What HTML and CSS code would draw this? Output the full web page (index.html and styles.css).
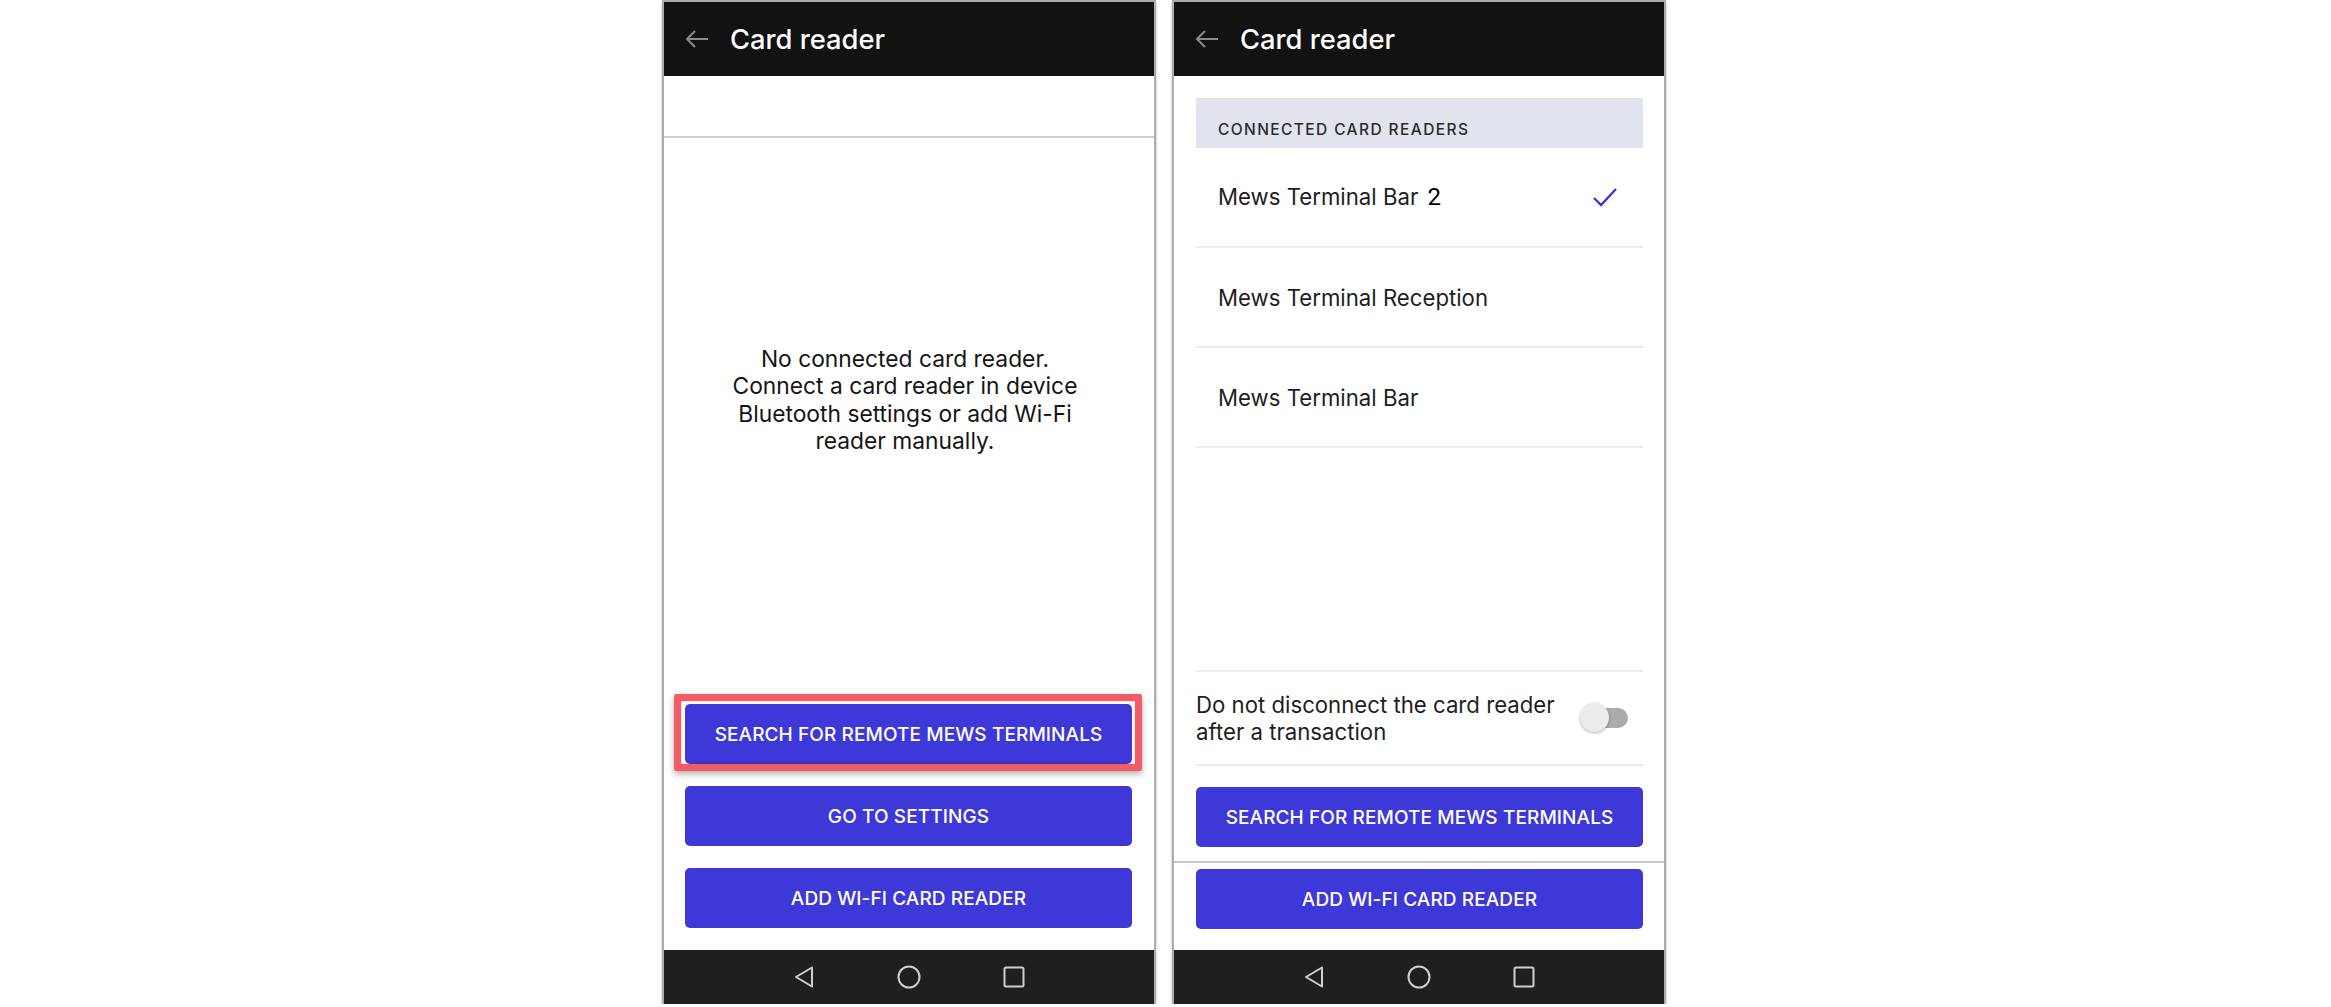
FILE: index.html
```html
<!DOCTYPE html>
<html lang="en">
<head>
    <meta charset="UTF-8">
    <title>Card reader</title>
    <link rel="stylesheet" href="styles.css">
</head>
<body>
    <!-- Empty state -->
    <div class="phone">
        <div class="app-bar">
            <svg class="back" width="26" height="24" viewBox="0 0 26 24"><path d="M24 12H3M11 4l-8 8 8 8" fill="none" stroke="#8a8a8a" stroke-width="2"/></svg>
            <span class="title">Card reader</span>
        </div>
        <div class="strip"></div>
        <div class="empty">
            <p class="empty-text">No connected card reader.<br>Connect a card reader in device<br>Bluetooth settings or add Wi-Fi<br>reader manually.</p>
        </div>
        <div class="actions">
            <button class="btn btn-marked">SEARCH FOR REMOTE MEWS TERMINALS</button>
            <button class="btn">GO TO SETTINGS</button>
            <button class="btn">ADD WI-FI CARD READER</button>
        </div>
        <div class="nav-bar">
            <svg width="22" height="24" viewBox="0 0 22 24"><path d="M19 2.5 L3 12 L19 21.5 Z" fill="none" stroke="#cfcfcf" stroke-width="2" stroke-linejoin="round"/></svg>
            <svg width="24" height="24" viewBox="0 0 24 24"><circle cx="12" cy="12" r="10.5" fill="none" stroke="#cfcfcf" stroke-width="2"/></svg>
            <svg width="22" height="22" viewBox="0 0 22 22"><rect x="1.5" y="1.5" width="19" height="19" rx="1.5" fill="none" stroke="#cfcfcf" stroke-width="2"/></svg>
        </div>
    </div>

    <!-- Connected readers -->
    <div class="phone">
        <div class="app-bar">
            <svg class="back" width="26" height="24" viewBox="0 0 26 24"><path d="M24 12H3M11 4l-8 8 8 8" fill="none" stroke="#8a8a8a" stroke-width="2"/></svg>
            <span class="title">Card reader</span>
        </div>
        <div class="sheet">
            <div class="section-head">CONNECTED CARD READERS</div>
            <div class="reader">
                <span>Mews Terminal Bar <span class="num">2</span></span>
                <svg width="26" height="22" viewBox="0 0 26 22"><path d="M2 12 L9 19 L24 3" fill="none" stroke="#3e38d8" stroke-width="2.4"/></svg>
            </div>
            <div class="reader"><span>Mews Terminal Reception</span></div>
            <div class="reader"><span>Mews Terminal Bar</span></div>
            <div class="spacer"></div>
            <div class="setting">
                <span>Do not disconnect the card reader<br>after a transaction</span>
                <div class="switch"><div class="knob"></div></div>
            </div>
            <button class="btn">SEARCH FOR REMOTE MEWS TERMINALS</button>
        </div>
        <div class="footer">
            <button class="btn">ADD WI-FI CARD READER</button>
        </div>
        <div class="nav-bar">
            <svg width="22" height="24" viewBox="0 0 22 24"><path d="M19 2.5 L3 12 L19 21.5 Z" fill="none" stroke="#cfcfcf" stroke-width="2" stroke-linejoin="round"/></svg>
            <svg width="24" height="24" viewBox="0 0 24 24"><circle cx="12" cy="12" r="10.5" fill="none" stroke="#cfcfcf" stroke-width="2"/></svg>
            <svg width="22" height="22" viewBox="0 0 22 22"><rect x="1.5" y="1.5" width="19" height="19" rx="1.5" fill="none" stroke="#cfcfcf" stroke-width="2"/></svg>
        </div>
    </div>
</body>
</html>
```

FILE: styles.css
```css
body {
    margin: 0;
    padding: 0 3px 0 0;
    background: #fff;
    display: flex;
    justify-content: center;
    gap: 16px;
    font-family: Inter, "Liberation Sans", sans-serif;
    color: #1e1e1e;
}
.phone {
    width: 494px;
    height: 1004px;
    box-sizing: border-box;
    border: 2px solid #ababab;
    border-bottom: none;
    display: flex;
    flex-direction: column;
    background: #fff;
    box-shadow: 0 2px 3px rgba(0, 0, 0, 0.25);
}
.app-bar {
    height: 74px;
    flex: none;
    background: #121212;
    display: flex;
    align-items: center;
    padding-left: 20px;
}
.back {
    margin-right: 20px;
}
.title {
    color: #fff;
    font-size: 27.3px;
    font-weight: 500;
}
.strip {
    height: 60px;
    flex: none;
    border-bottom: 2px solid #cfcfcf;
}
.empty {
    flex: 1;
    display: flex;
    align-items: center;
    justify-content: center;
    padding: 0 8px 43px 0;
}
.empty-text {
    margin: 0;
    text-align: center;
    font-size: 22.8px;
    line-height: 27.5px;
    color: #151515;
}
.actions {
    display: flex;
    flex-direction: column;
    gap: 22px;
    padding: 0 22px 22px 21px;
}
.btn {
    height: 60px;
    width: 100%;
    flex: none;
    border: none;
    border-radius: 5px;
    background: #3e38d8;
    color: #fff;
    font-family: Inter, "Liberation Sans", sans-serif;
    font-size: 19px;
    font-weight: 500;
    letter-spacing: 0.1px;
}
.btn-marked {
    position: relative;
}
/* red highlight frame drawn over the first button */
.btn-marked::after {
    content: '';
    position: absolute;
    top: -10px;
    left: -11px;
    right: -10px;
    bottom: -7px;
    border: 7px solid #f35c65;
    border-radius: 2px;
    box-shadow: 0 3px 6px rgba(0, 0, 0, 0.3), inset 0 0 3px rgba(0, 0, 0, 0.2);
}
.nav-bar {
    height: 54px;
    flex: none;
    background: #1f1f1f;
    display: flex;
    align-items: center;
    justify-content: center;
    gap: 82px;
}
.sheet {
    flex: 1;
    display: flex;
    flex-direction: column;
    padding: 22px 21px 14px 22px;
    border-bottom: 2px solid #c8c8c8;
}
.section-head {
    height: 50px;
    flex: none;
    background: #e1e4ee;
    display: flex;
    align-items: center;
    padding: 12px 22px 0;
    box-sizing: border-box;
    font-size: 15.5px;
    letter-spacing: 1.4px;
    font-weight: 500;
    color: #2b2b2b;
}
.reader {
    height: 100px;
    flex: none;
    box-sizing: border-box;
    border-bottom: 2px solid #ececec;
    display: flex;
    align-items: center;
    justify-content: space-between;
    padding: 0 25px 0 22px;
    font-size: 22.2px;
    color: #1e1e1e;
}
.num {
    font-family: Roboto, sans-serif;
    font-size: 24px;
    color: #000;
    margin-left: 3px;
}
.spacer {
    flex: 1;
}
.setting {
    height: 96px;
    flex: none;
    box-sizing: border-box;
    border-top: 2px solid #ececec;
    border-bottom: 2px solid #ececec;
    display: flex;
    align-items: center;
    justify-content: space-between;
    padding-right: 15px;
    font-size: 22.2px;
    line-height: 27px;
    margin-bottom: 21px;
}
.switch {
    width: 44px;
    height: 20px;
    border-radius: 10px;
    background: #ababab;
    position: relative;
}
.knob {
    position: absolute;
    left: -4px;
    top: -5px;
    width: 29px;
    height: 29px;
    border-radius: 50%;
    background: #ececec;
    box-shadow: 0 1px 3px rgba(0, 0, 0, 0.3);
}
.footer {
    padding: 6px 21px 21px 22px;
}
```
